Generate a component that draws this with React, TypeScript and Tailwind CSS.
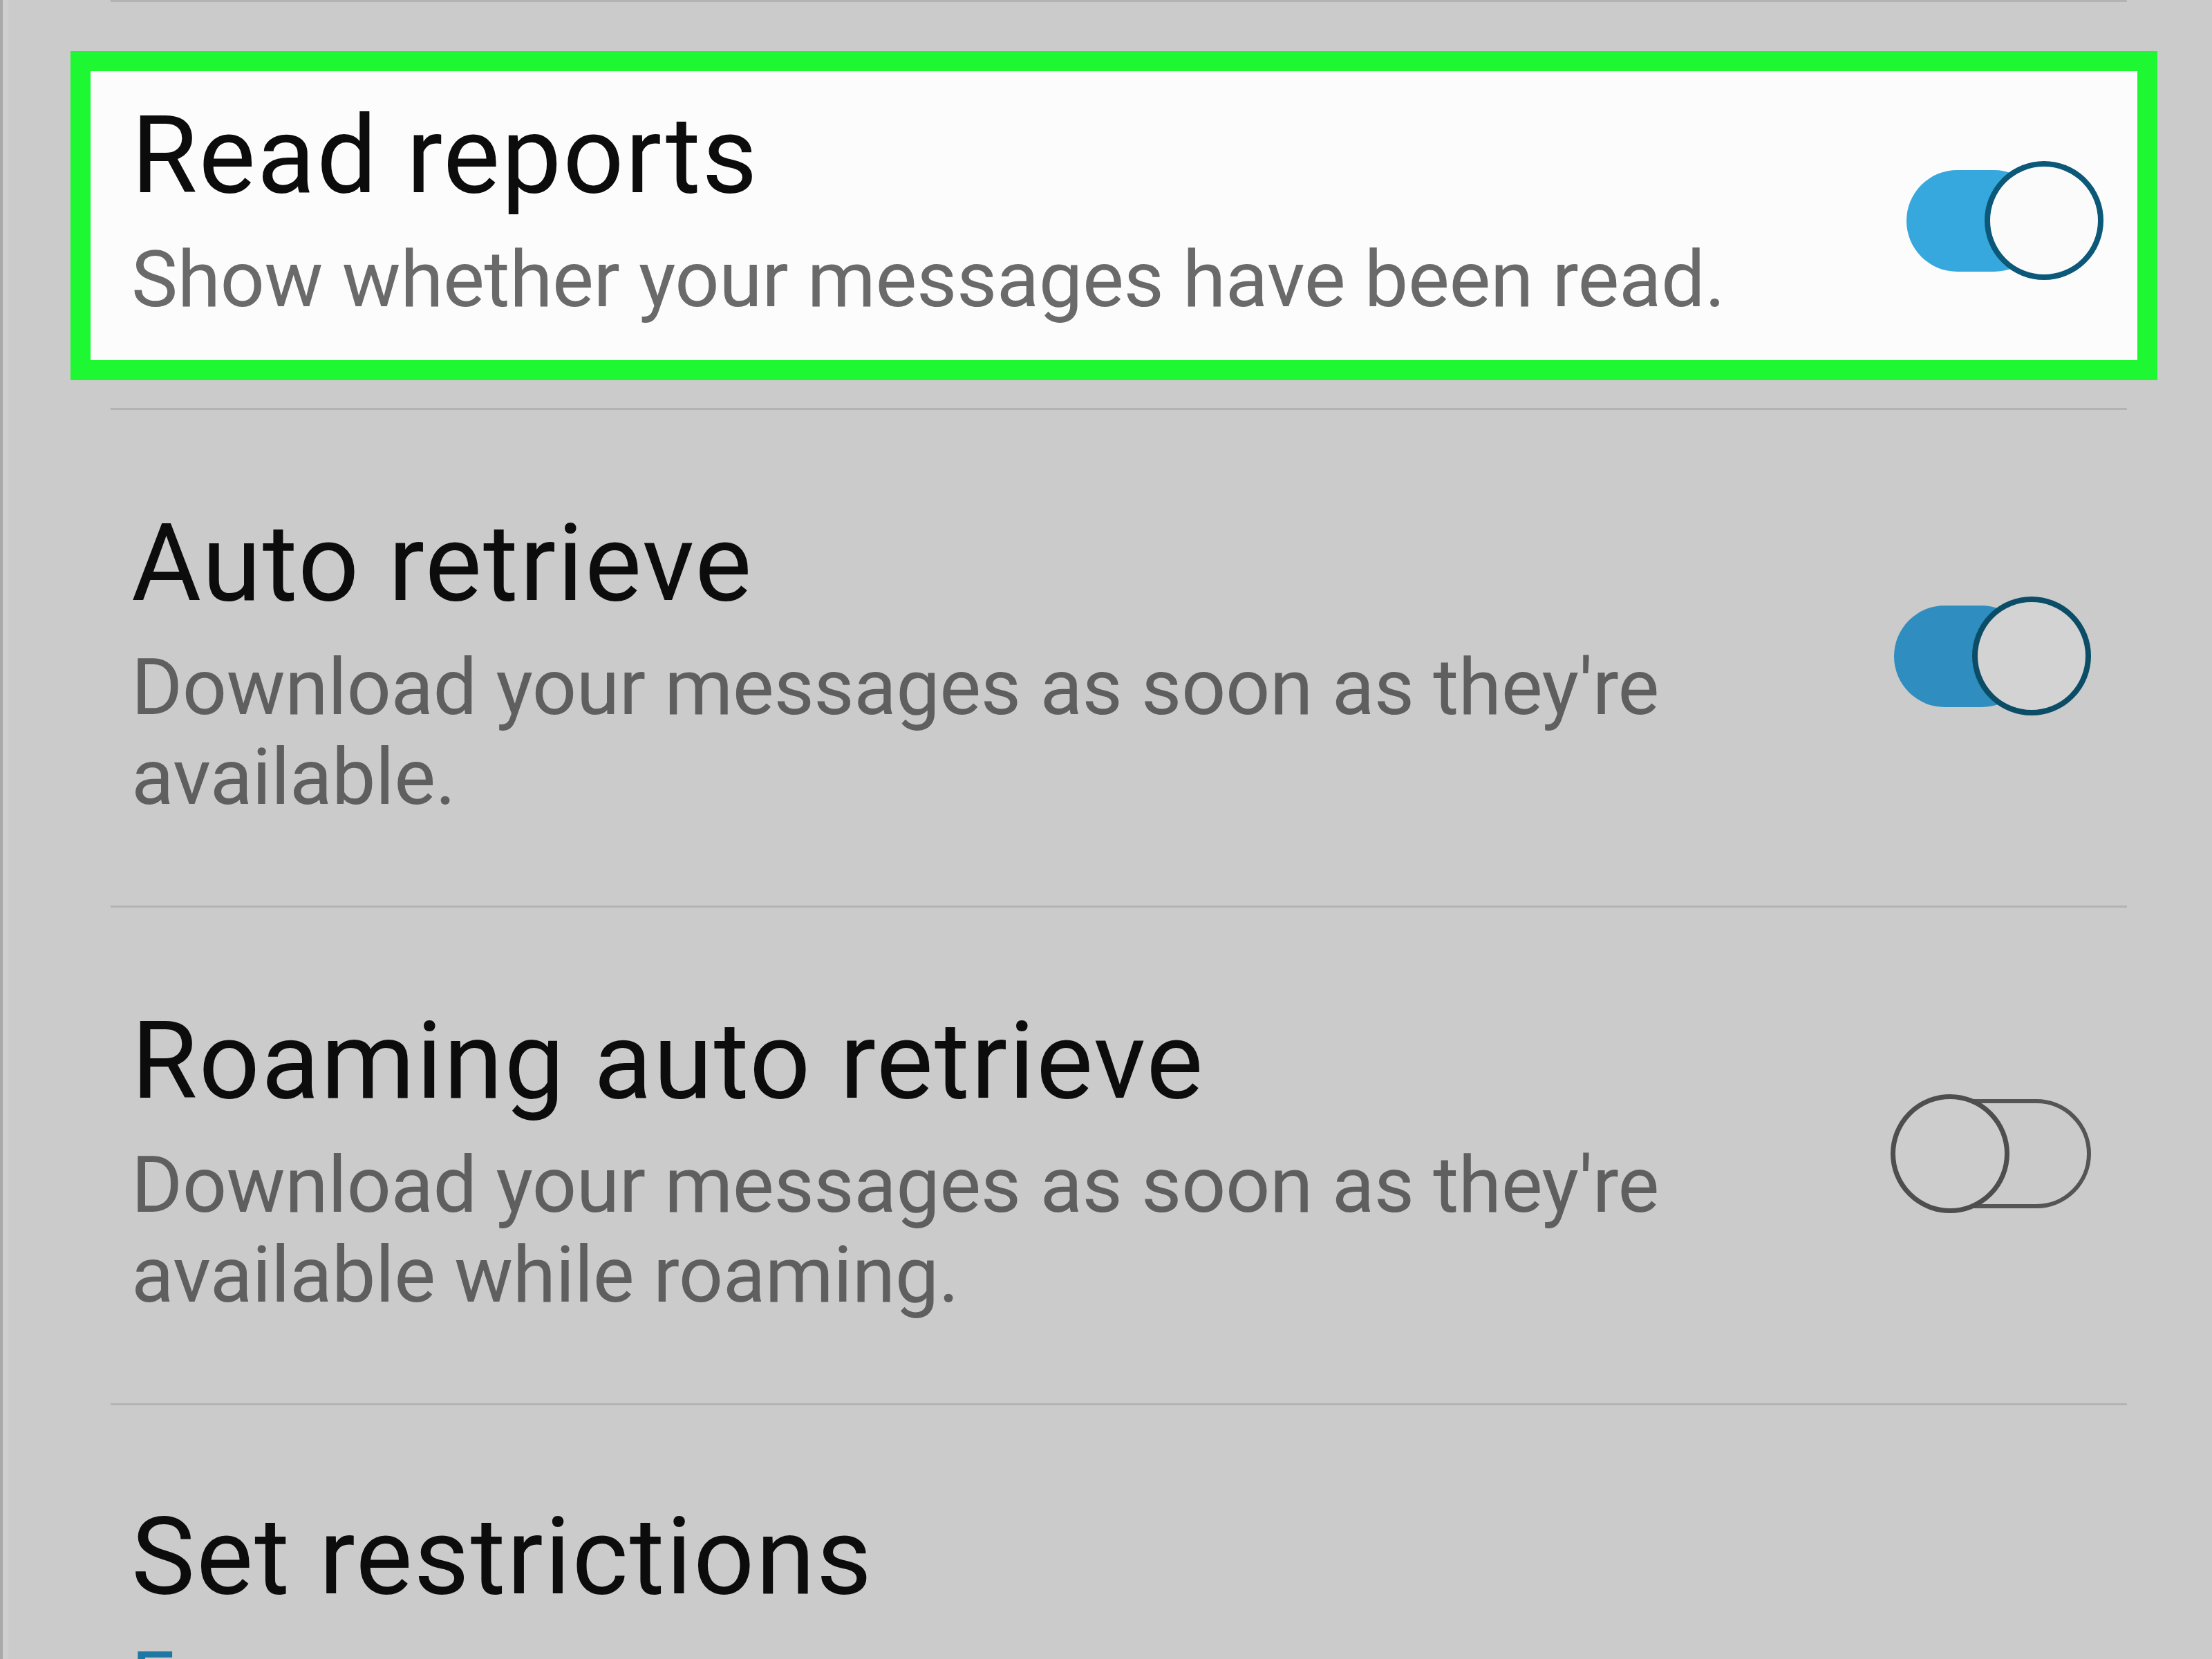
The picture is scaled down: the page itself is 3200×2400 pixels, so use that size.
import React from "react";

type ToggleProps = { on: boolean; dim?: boolean; className?: string };

// Samsung-style switch: pill track with a ringed round thumb on top.
function Toggle({ on, dim, className = "" }: ToggleProps) {
  if (on) {
    return (
      <div className={`flex shrink-0 items-center ${className}`}>
        <div
          className={`h-[147px] w-[200px] rounded-full ${
            dim ? "bg-[#2f8dbf]" : "bg-[#37a8de]"
          }`}
        />
        <div
          className={`-ml-[87px] h-[172px] w-[172px] rounded-full border-[8px] ${
            dim ? "border-[#0b4d66] bg-[#d3d3d3]" : "border-[#0b5878] bg-[#fbfbfb]"
          }`}
        />
      </div>
    );
  }
  return (
    <div className={`flex shrink-0 items-center ${className}`}>
      <div className="relative z-10 h-[172px] w-[172px] rounded-full border-[7px] border-[#4e4e4e] bg-[#cdcdcd]" />
      <div className="-ml-[160px] h-[158px] w-[278px] rounded-full border-[6px] border-[#555555]" />
    </div>
  );
}

function Divider() {
  return <div className="h-[3px] w-full bg-[#b3b3b3]" />;
}

type RowProps = {
  title: string;
  lines: string[];
  dim?: boolean;
  accent?: string;
  top?: string;
  children?: React.ReactNode;
};

function Row({ title, lines, dim = true, accent, top = "pt-[139px]", children }: RowProps) {
  return (
    <div className={`relative z-10 flex items-start pb-[120px] pl-[30px] pr-[52px] ${top}`}>
      <div className="min-w-0 flex-1">
        <div className="whitespace-nowrap text-[155px] leading-[166px] tracking-[2px] text-[#0c0c0c]">
          {title}
        </div>
        <div
          className={`mt-[32px] text-[113px] leading-[130px] tracking-[-0.4px] ${
            accent ? accent : dim ? "text-[#5f5f5f]" : "text-[#6a6a6a]"
          }`}
        >
          {lines.map((l, i) => (
            <div key={i} className="whitespace-nowrap">
              {l}
            </div>
          ))}
        </div>
      </div>
      {children}
    </div>
  );
}

export default function App() {
  return (
    <div className="flex h-[2400px] w-[3200px] overflow-hidden bg-[#cbcbcb] font-['Roboto',_'Noto_Sans',_sans-serif]">
      <div className="w-[4px] shrink-0 bg-[#a9a9a9]" />
      <div className="w-[8px] shrink-0 bg-[#cfcfcf]" />
      <div className="flex-1 pl-[148px] pr-[123px]">
        <Divider />

        {/* Highlighted setting */}
        <div className="relative">
          <div className="absolute left-[-58px] top-[71px] z-0 h-[476px] w-[3019px] border-[29px] border-[#1ef832] bg-[#fcfcfc]" />
          <Row
            title="Read reports"
            lines={["Show whether your messages have been read."]}
            dim={false}
          >
            <Toggle on className="-mr-[18px] mt-[91px]" />
          </Row>
        </div>
        <Divider />

        <Row
          title="Auto retrieve"
          lines={["Download your messages as soon as they're", "available."]}
        >
          <Toggle on dim className="mt-[131px]" />
        </Row>
        <Divider />

        <Row
          title="Roaming auto retrieve"
          lines={["Download your messages as soon as they're", "available while roaming."]}
        >
          <Toggle on={false} className="mt-[131px]" />
        </Row>
        <Divider />

        <Row title="Set restrictions" lines={["Free"]} accent="text-[#1f78a3]" top="pt-[136px]" />
      </div>
    </div>
  );
}
